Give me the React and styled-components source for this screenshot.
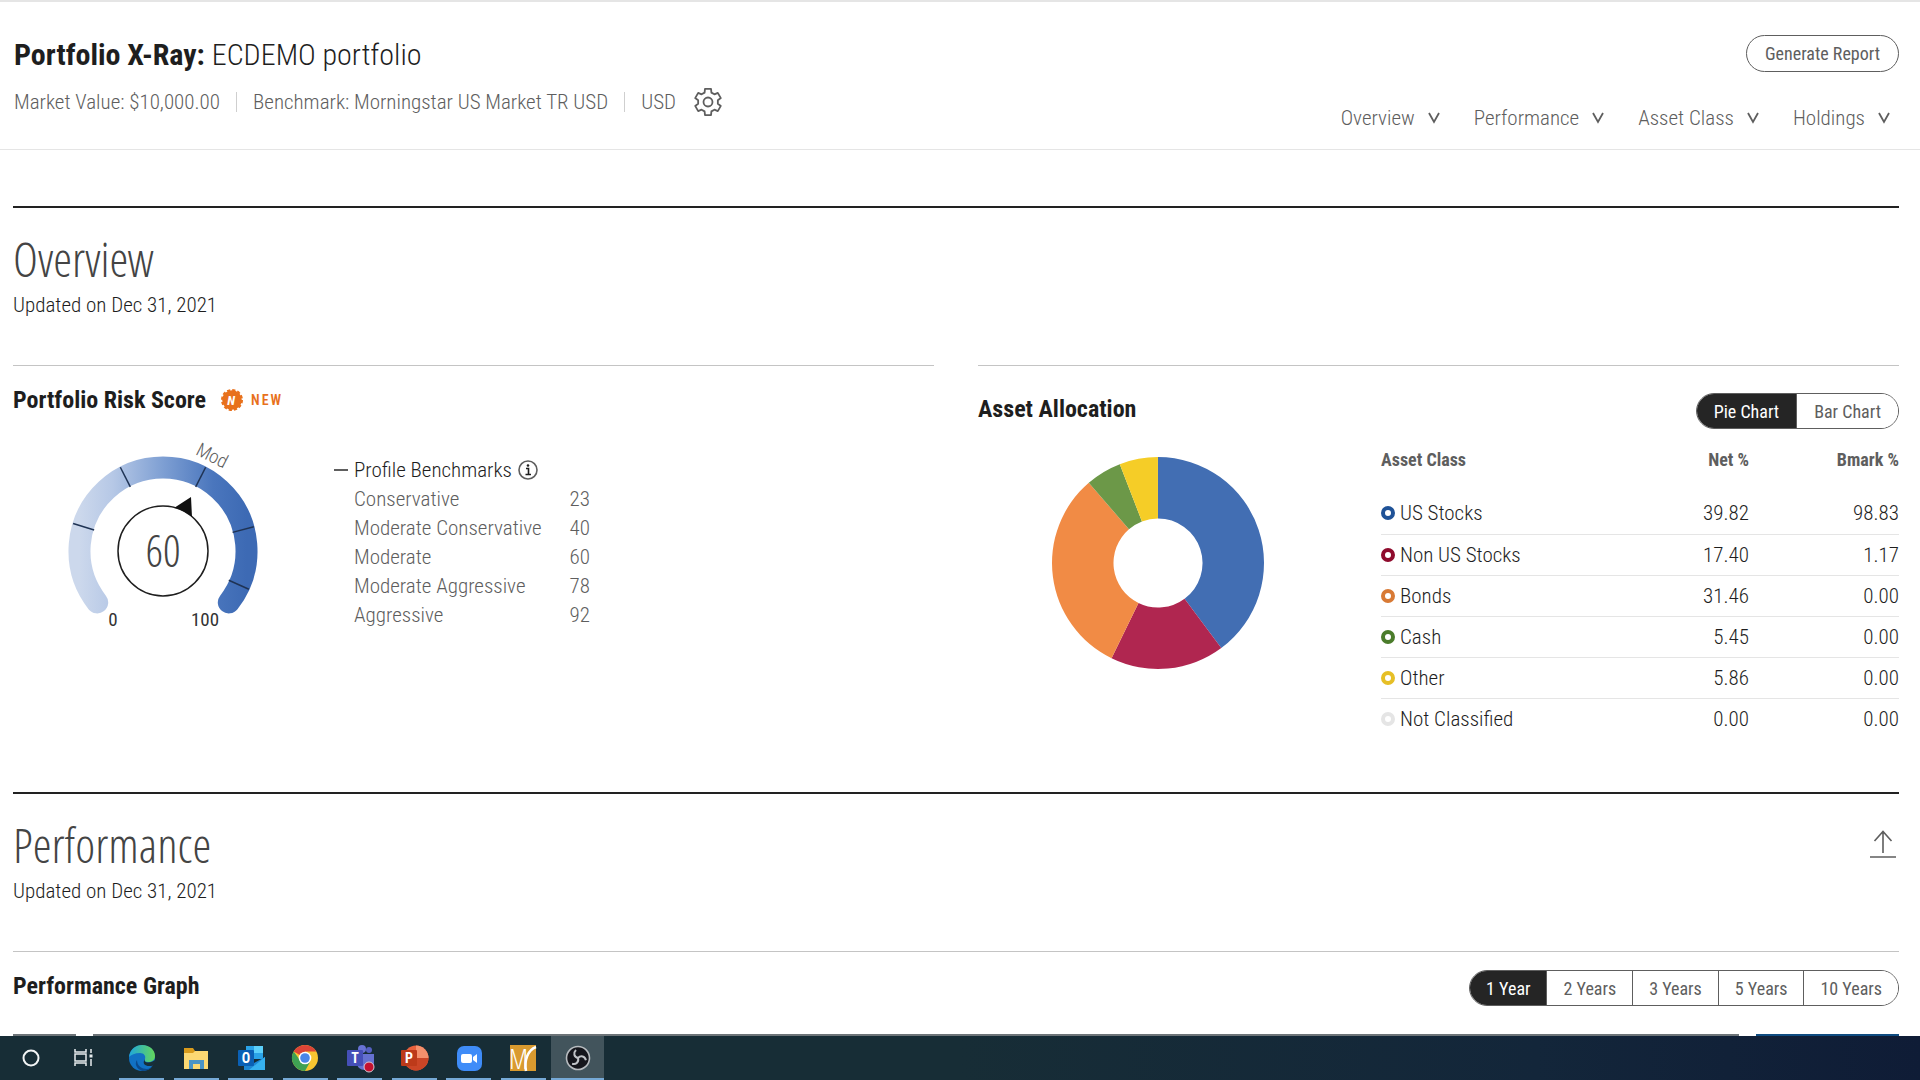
import styled, { createGlobalStyle } from "styled-components";

const ink = "#1e1e1e";
const grey = "#5e5e5e";
const rule = "#c4c4c4";
const paleRule = "#e5e5e5";

const textFont = `"Roboto Condensed", "Liberation Sans", sans-serif`;
const displayFont = `"Open Sans Condensed Light", "Roboto Condensed", sans-serif`;

const benchmarks = [
  ["Conservative", 23],
  ["Moderate Conservative", 40],
  ["Moderate", 60],
  ["Moderate Aggressive", 78],
  ["Aggressive", 92],
];

const assets = [
  { name: "US Stocks", net: 39.82, bmark: 98.83, ring: "#1f5297", fill: "#426eb3" },
  { name: "Non US Stocks", net: 17.4, bmark: 1.17, ring: "#8f0b2d", fill: "#b02650" },
  { name: "Bonds", net: 31.46, bmark: 0, ring: "#d87a35", fill: "#f18b45" },
  { name: "Cash", net: 5.45, bmark: 0, ring: "#4b7c2b", fill: "#6c9848" },
  { name: "Other", net: 5.86, bmark: 0, ring: "#e6bf26", fill: "#f5cd27" },
  { name: "Not Classified", net: 0, bmark: 0, ring: "#e5e5e5", fill: "#e5e5e5" },
];

// angle in degrees, clockwise from twelve o'clock
const polar = (cx, cy, r, angle) => {
  const rad = (angle * Math.PI) / 180;
  return [cx + r * Math.sin(rad), cy - r * Math.cos(rad)];
};

const Chevron = () => (
  <svg width="12" height="12" viewBox="0 0 12 12" aria-hidden="true">
    <path d="M1 1 L6 10 L11 1" fill="none" stroke={grey} strokeWidth="1.8" />
  </svg>
);

const Gear = () => {
  const teeth = [0, 60, 120, 180, 240, 300].flatMap((a) => [
    polar(14, 15, 10, a - 20),
    polar(14, 15, 13.4, a - 13),
    polar(14, 15, 13.4, a + 13),
    polar(14, 15, 10, a + 20),
  ]);
  return (
    <svg width="28" height="30" viewBox="0 0 28 30" aria-hidden="true">
      <g fill="none" stroke={grey} strokeWidth="1.8" strokeLinejoin="round">
        <polygon points={teeth.join(" ")} />
        <circle cx="14" cy="15" r="4.5" />
      </g>
    </svg>
  );
};

const NewBadge = () => (
  <svg width="22" height="22" viewBox="0 0 22 22" aria-hidden="true">
    <circle cx="11" cy="11" r="9.8" fill="#e8711c" />
    <circle
      cx="11"
      cy="11"
      r="10"
      fill="none"
      stroke="#e8711c"
      strokeWidth="2"
      strokeDasharray="3.2 2.03"
    />
    <text
      x="11"
      y="15.5"
      textAnchor="middle"
      fill="#fff"
      fontSize="13"
      fontWeight="700"
      fontStyle="italic"
    >
      N
    </text>
  </svg>
);

const Info = () => (
  <svg width="20" height="20" viewBox="0 0 20 20" aria-hidden="true">
    <circle cx="10" cy="10" r="9" fill="none" stroke={grey} strokeWidth="1.6" />
    <path d="M8 8.5h2.5v6M7.5 14.5h5.5" fill="none" stroke={ink} strokeWidth="1.6" />
    <circle cx="10" cy="5.5" r="1.3" fill={ink} />
  </svg>
);

const Upload = () => (
  <svg width="28" height="30" viewBox="0 0 28 30" aria-hidden="true">
    <path
      d="M14 24V3M5.5 12 14 2.5 22.5 12M1 28h26"
      fill="none"
      stroke={grey}
      strokeWidth="1.6"
    />
  </svg>
);

const Gauge = ({ score }) => {
  const [sx, sy] = polar(105, 105, 83.5, -128);
  const [ex, ey] = polar(105, 105, 83.5, 128);
  return (
    <svg width="210" height="194" viewBox="0 0 210 194" role="img" aria-label="Risk score">
      <defs>
        <linearGradient id="risk" x1="0" x2="1" y1="0.5" y2="0.5">
          <stop offset="0" stopColor="#ccd8ec" />
          <stop offset="0.2" stopColor="#b6c8e6" />
          <stop offset="0.5" stopColor="#7e9fd3" />
          <stop offset="0.8" stopColor="#4a76bd" />
          <stop offset="1" stopColor="#3d6ab4" />
        </linearGradient>
      </defs>
      <path
        d={`M${sx} ${sy}A83.5 83.5 0 1 1 ${ex} ${ey}`}
        fill="none"
        stroke="url(#risk)"
        strokeWidth="22"
        strokeLinecap="round"
      />
      {[-73, -27, 27, 75, 114].map((a) => {
        const [x1, y1] = polar(105, 105, 72, a);
        const [x2, y2] = polar(105, 105, 94, a);
        return <path key={a} d={`M${x1} ${y1}L${x2} ${y2}`} stroke="#1f3354" strokeWidth="1.5" />;
      })}
      <circle cx="105" cy="105" r="45" fill="none" stroke={ink} strokeWidth="1.5" />
      <path d="M116 62 L133 51 L134 71 Q126 64 116 62z" fill="#111" />
      <ScoreText x="105" y="121">
        {score}
      </ScoreText>
      <GaugeText x="154" y="16" $light transform="rotate(27 154 10)">
        Mod
      </GaugeText>
      <GaugeText x="55" y="180">
        0
      </GaugeText>
      <GaugeText x="147" y="180">
        100
      </GaugeText>
    </svg>
  );
};

const Pie = () => {
  let turned = 0;
  const slices = assets
    .filter((a) => a.net > 0)
    .map((a) => {
      const from = turned * 3.6;
      turned += a.net;
      const to = turned * 3.6;
      const big = to - from > 180 ? 1 : 0;
      const d = [
        `M${polar(106, 106, 44.5, from)}`,
        `L${polar(106, 106, 106, from)}`,
        `A106 106 0 ${big} 1 ${polar(106, 106, 106, to)}`,
        `L${polar(106, 106, 44.5, to)}`,
        `A44.5 44.5 0 ${big} 0 ${polar(106, 106, 44.5, from)}z`,
      ];
      return <path key={a.name} d={d.join("")} fill={a.fill} />;
    });
  return (
    <svg width="212" height="212" viewBox="0 0 212 212" role="img" aria-label="Asset allocation">
      {slices}
    </svg>
  );
};

const LogoText = styled.text`
  fill: #fff;
  font-family: ${displayFont};
  font-size: 28px;
  font-weight: 400;
`;

const Tile = ({ color, children }) => (
  <>
    <rect x="1" y="6" width="16" height="16" rx="1" fill={color} />
    <text x="9" y="19" textAnchor="middle" fill="#fff" fontSize="14" fontWeight="700">
      {children}
    </text>
  </>
);

const icons = {
  Edge: (
    <>
      <defs>
        <linearGradient id="edgeTop" x1="0" x2="1">
          <stop offset="0" stopColor="#1fa6dc" />
          <stop offset="1" stopColor="#63d65b" />
        </linearGradient>
      </defs>
      <circle cx="14" cy="14" r="13" fill="#1171c4" />
      <path
        d="M1 13C2 5 8 1 14 1c8 0 13 5 13 11 0 4-3 6-7 6-3 0-4-1-3-3 1-3-1-6-5-6-5 0-9 2-11 4z"
        fill="url(#edgeTop)"
      />
      <path d="M9 16c0 6 5 9 10 9 2 0 4-1 6-3-3 4-7 5-11 5-5-2-8-7-5-11z" fill="#0b4a8e" />
      <path d="M17 15c-1 2 0 3.5 3 3.5 3 0 5-1 7-2.5l2 1.5-4 4c-6 2-12-1-8-6.5z" fill="#182e38" />
    </>
  ),
  Explorer: (
    <>
      <path d="M2 4h9l2 3h13v18H2z" fill="#d99b1c" />
      <path d="M2 9h9l2-2h13v18H2z" fill="#fcd873" />
      <path d="M7 25v-9h15v9h-4v-5h-7v5z" fill="#4b94c6" />
    </>
  ),
  Outlook: (
    <>
      <path d="M9 2h17v13H9z" fill="#2aa3e8" />
      <path d="M17 2h9v7h-9z" fill="#5cd0fa" />
      <path d="M7 13l10 6 11-6v13H7z" fill="#1d86d2" />
      <path d="M28 13v13H12z" fill="#36b1ef" />
      <Tile color="#0a60b5">O</Tile>
    </>
  ),
  Chrome: (
    <>
      <circle cx="14" cy="14" r="13" fill="#f7c531" />
      <path d="M14 14 2.7 7.5A13 13 0 0 1 25.3 7.5H14z" fill="#dc4437" />
      <path d="M2.7 7.5A13 13 0 0 0 14 27l5-9-8 1z" fill="#3fa153" />
      <circle cx="14" cy="14" r="6.3" fill="#fff" />
      <circle cx="14" cy="14" r="4.8" fill="#4a86e8" />
    </>
  ),
  Teams: (
    <>
      <circle cx="16" cy="5" r="4" fill="#6872d4" />
      <circle cx="23" cy="6" r="3" fill="#5560c2" />
      <path d="M11 10h17v9c0 4-4 7-9 7s-8-3-8-7z" fill="#6571d0" />
      <Tile color="#454fb8">T</Tile>
      <circle cx="23" cy="23" r="5" fill="#c4122f" stroke="#d9c9d4" />
    </>
  ),
  PowerPoint: (
    <>
      <circle cx="16" cy="14" r="12.5" fill="#e8603c" />
      <path d="M16 1.5A12.5 12.5 0 0 1 28.5 14H16z" fill="#f4906c" />
      <path d="M3.5 14h25a12.5 12.5 0 0 1-25 0z" fill="#cb4526" />
      <Tile color="#bd3a1a">P</Tile>
    </>
  ),
  Zoom: (
    <>
      <rect x="2" y="2" width="25" height="25" rx="7" fill="#3f8cf8" />
      <rect x="6" y="10" width="11" height="9" rx="2" fill="#fff" />
      <path d="M18 13l4-3v9l-4-3z" fill="#fff" />
    </>
  ),
  "Morningstar Office": (
    <>
      <rect x="1" y="1" width="26" height="26" fill="#d99a2f" />
      <path d="M17 27C15 16 19 6 27 3" fill="none" stroke="#fff" strokeWidth="2.5" />
      <LogoText x="0" y="25">
        M
      </LogoText>
    </>
  ),
  "OBS Studio": (
    <>
      <circle cx="14" cy="14" r="11.5" fill="#15161c" stroke="#b8bcc0" strokeWidth="1.6" />
      {[0, 120, 240].map((a) => (
        <path
          key={a}
          d="M14 14c-4-1-5-5-2-8"
          transform={`rotate(${a} 14 14)`}
          fill="none"
          stroke="#c0c3c7"
          strokeWidth="2"
        />
      ))}
    </>
  ),
};

const Cortana = () => (
  <svg width="28" height="28" viewBox="0 0 28 28" aria-hidden="true">
    <circle cx="14" cy="14" r="7.5" fill="none" stroke="#f1f4f5" strokeWidth="2" />
  </svg>
);

const TaskView = () => (
  <svg width="28" height="28" viewBox="0 0 28 28" aria-hidden="true">
    <g fill="none" stroke="#e7ecee" strokeWidth="1.5">
      <path d="M5 5v3h11V5M5 22v-3h11v3M5 10h11v7H5zM21 5v4M21 15v7" />
      <path d="M19.5 12h3" strokeWidth="3" />
    </g>
  </svg>
);

const Segments = ({ label, options, tight }) => (
  <Segmented role="group" aria-label={label}>
    {options.map((option, i) => (
      <Segment
        key={option}
        type="button"
        $active={i === 0}
        $tight={tight}
        aria-pressed={i === 0}
      >
        {option}
      </Segment>
    ))}
  </Segmented>
);

const App = () => (
  <Screen>
    <GlobalStyle />
    <Page>
      <Header>
        <div>
          <Title>
            Portfolio X-Ray: <span>ECDEMO portfolio</span>
          </Title>
          <Meta>
            <MetaItem>Market Value: $10,000.00</MetaItem>
            <MetaItem>Benchmark: Morningstar US Market TR USD</MetaItem>
            <MetaItem>USD</MetaItem>
            <IconButton type="button" aria-label="Settings">
              <Gear />
            </IconButton>
          </Meta>
        </div>
        <HeaderSide>
          <Pill type="button">Generate Report</Pill>
          <Nav>
            {["Overview", "Performance", "Asset Class", "Holdings"].map((item) => (
              <NavButton key={item} type="button">
                {item}
                <Chevron />
              </NavButton>
            ))}
          </Nav>
        </HeaderSide>
      </Header>

      <Content>
        <Section>
          <SectionHead>
            <div>
              <SectionTitle>Overview</SectionTitle>
              <Updated>Updated on Dec 31, 2021</Updated>
            </div>
          </SectionHead>
          <Cards>
            <Card>
              <CardHead>
                <CardTitle>Portfolio Risk Score</CardTitle>
                <NewTag>
                  <NewBadge />
                  NEW
                </NewTag>
              </CardHead>
              <Risk>
                <Gauge score={60} />
                <Profile>
                  <ProfileHead>
                    <Dash />
                    Profile Benchmarks
                    <Info />
                  </ProfileHead>
                  <ProfileTable>
                    <tbody>
                      {benchmarks.map(([name, value]) => (
                        <tr key={name}>
                          <th scope="row">{name}</th>
                          <td>{value}</td>
                        </tr>
                      ))}
                    </tbody>
                  </ProfileTable>
                </Profile>
              </Risk>
            </Card>
            <Card>
              <CardHead $spread $roomy>
                <CardTitle>Asset Allocation</CardTitle>
                <Segments label="Chart type" options={["Pie Chart", "Bar Chart"]} />
              </CardHead>
              <Allocation>
                <PieBox>
                  <Pie />
                </PieBox>
                <AssetTable>
                  <thead>
                    <tr>
                      <th>Asset Class</th>
                      <th>Net %</th>
                      <th>Bmark %</th>
                    </tr>
                  </thead>
                  <tbody>
                    {assets.map((a) => (
                      <tr key={a.name}>
                        <td>
                          <AssetName>
                            <Ring $color={a.ring} />
                            {a.name}
                          </AssetName>
                        </td>
                        <td>{a.net.toFixed(2)}</td>
                        <td>{a.bmark.toFixed(2)}</td>
                      </tr>
                    ))}
                  </tbody>
                </AssetTable>
              </Allocation>
            </Card>
          </Cards>
        </Section>

        <Section>
          <SectionHead>
            <div>
              <SectionTitle>Performance</SectionTitle>
              <Updated>Updated on Dec 31, 2021</Updated>
            </div>
            <IconButton type="button" aria-label="Export">
              <Upload />
            </IconButton>
          </SectionHead>
          <Card>
            <CardHead $spread>
              <CardTitle>Performance Graph</CardTitle>
              <Segments
                label="Period"
                options={["1 Year", "2 Years", "3 Years", "5 Years", "10 Years"]}
                tight
              />
            </CardHead>
            <GraphEdge>
              <span />
              <span />
              <span />
            </GraphEdge>
          </Card>
        </Section>
      </Content>
    </Page>

    <Taskbar>
      <Task type="button" aria-label="Search">
        <Cortana />
      </Task>
      <Task type="button" aria-label="Task view">
        <TaskView />
      </Task>
      <Apps>
        {Object.entries(icons).map(([name, icon]) => (
          <AppButton key={name} type="button" aria-label={name} $active={name === "OBS Studio"}>
            <svg width="28" height="28" viewBox="0 0 28 28" aria-hidden="true">
              {icon}
            </svg>
          </AppButton>
        ))}
      </Apps>
    </Taskbar>
  </Screen>
);

const GlobalStyle = createGlobalStyle`
  * {
    box-sizing: border-box;
  }

  body {
    margin: 0;
    background: #fff;
    color: ${ink};
    font-family: ${textFont};
    font-size: 21px;
    font-weight: 300;
    line-height: 28px;
  }

  button {
    font-family: inherit;
    cursor: pointer;
  }

  h1, h2, h3, p {
    margin: 0;
  }

  svg {
    display: block;
    flex-shrink: 0;
    overflow: visible;
  }
`;

const Screen = styled.div`
  display: flex;
  flex-direction: column;
  height: 100vh;
`;

const Page = styled.div`
  flex: 1;
  min-height: 0;
  overflow: hidden;
  border-top: 2px solid ${paleRule};
`;

const Header = styled.header`
  display: flex;
  justify-content: space-between;
  height: 148px;
  padding: 33px 21px 0 14px;
  border-bottom: 1px solid ${paleRule};
`;

const Title = styled.h1`
  font-size: 30px;
  line-height: 40px;
  font-weight: 700;

  span {
    font-weight: 300;
  }
`;

const Meta = styled.div`
  display: flex;
  align-items: center;
  margin-top: 12px;
  color: ${grey};
`;

const MetaItem = styled.span`
  line-height: 20px;

  & + & {
    margin-left: 16px;
    padding-left: 16px;
    border-left: 1px solid #cfcfcf;
  }
`;

const IconButton = styled.button`
  height: 30px;
  margin-left: 18px;
  padding: 0;
  border: 0;
  background: none;
`;

const HeaderSide = styled.div`
  display: flex;
  flex-direction: column;
  align-items: flex-end;
  gap: 32px;
`;

const Pill = styled.button`
  height: 37px;
  padding: 0 18px;
  border: 1px solid ${grey};
  border-radius: 19px;
  background: #fff;
  color: ${grey};
  font-size: 18px;
`;

const Nav = styled.nav`
  display: flex;
  gap: 34px;
  margin-right: 9px;
`;

const NavButton = styled.button`
  display: flex;
  align-items: center;
  gap: 13px;
  padding: 0;
  border: 0;
  background: none;
  color: ${grey};
  font-size: 21px;
  font-weight: 300;
  line-height: 28px;
`;

const Content = styled.main`
  padding: 56px 21px 0 13px;
`;

const Section = styled.section`
  border-top: 2px solid #222;

  & + & {
    margin-top: 53px;
  }
`;

const SectionHead = styled.div`
  display: flex;
  justify-content: space-between;
  height: 157px;
  padding-top: 26px;

  ${IconButton} {
    margin: 9px 2px 0 0;
  }
`;

const SectionTitle = styled.h2`
  color: #444;
  font-family: ${displayFont};
  font-size: 48px;
  line-height: 50px;
  font-weight: 400;
`;

const Updated = styled.p`
  margin-top: 7px;
`;

const Cards = styled.div`
  display: grid;
  grid-template-columns: 1fr 1fr;
  gap: 44px;
`;

const Card = styled.div`
  border-top: 1px solid ${rule};
`;

const CardHead = styled.div`
  display: flex;
  align-items: flex-start;
  justify-content: ${({ $spread }) => ($spread ? "space-between" : "flex-start")};
  gap: 15px;
  padding-top: ${({ $roomy }) => ($roomy ? 27 : 18)}px;
`;

const CardTitle = styled.h3`
  font-size: 24px;
  line-height: 32px;
  font-weight: 700;
`;

const NewTag = styled.span`
  display: flex;
  align-items: center;
  gap: 8px;
  height: 32px;
  color: #e8711c;
  font-size: 14px;
  font-weight: 600;
  letter-spacing: 2px;
`;

const Risk = styled.div`
  display: flex;
  gap: 66px;
  padding: 30px 0 0 45px;
`;

const GaugeText = styled.text`
  fill: ${({ $light }) => ($light ? grey : "#333")};
  font-size: 19px;
  font-weight: ${({ $light }) => ($light ? 300 : 400)};
  text-anchor: middle;
`;

const ScoreText = styled.text`
  fill: #444;
  font-family: ${displayFont};
  font-size: 44px;
  font-weight: 400;
  text-anchor: middle;
`;

const Profile = styled.div`
  padding-top: 10px;
`;

const ProfileHead = styled.div`
  display: flex;
  align-items: center;
  gap: 6px;
`;

const Dash = styled.span`
  width: 14px;
  height: 2px;
  background: ${grey};
`;

const ProfileTable = styled.table`
  width: 236px;
  margin: 1px 0 0 20px;
  border-collapse: collapse;
  color: ${grey};
  line-height: 29px;

  th {
    padding: 0;
    text-align: left;
    font-weight: 300;
  }

  td {
    padding: 0;
    text-align: right;
  }
`;

const Allocation = styled.div`
  display: grid;
  grid-template-columns: 1fr 518px;
  gap: 44px;
`;

const PieBox = styled.div`
  display: flex;
  justify-content: center;
  padding-top: 28px;
`;

const AssetTable = styled.table`
  border-collapse: collapse;
  table-layout: fixed;

  th {
    height: 64px;
    padding: 17px 0 0;
    color: ${grey};
    font-size: 18px;
    text-align: right;
    vertical-align: top;
  }

  td {
    height: 41px;
    padding: 0;
    text-align: right;
  }

  th:first-child,
  td:first-child {
    text-align: left;
  }

  th:last-child {
    width: 150px;
  }

  tr + tr td {
    border-top: 1px solid ${paleRule};
  }
`;

const AssetName = styled.span`
  display: flex;
  align-items: center;
  gap: 5px;
`;

const Ring = styled.span`
  width: 14px;
  height: 14px;
  border: 4px solid ${({ $color }) => $color};
  border-radius: 50%;
`;

const Segmented = styled.div`
  display: flex;
  height: 36px;
  border: 1px solid ${grey};
  border-radius: 18px;
  overflow: hidden;
`;

const Segment = styled.button`
  padding: 0 ${({ $tight }) => ($tight ? 16 : 17)}px;
  border: 0;
  background: ${({ $active }) => ($active ? "#252525" : "#fff")};
  color: ${({ $active }) => ($active ? "#fff" : grey)};
  font-size: 18px;

  & + & {
    border-left: 1px solid ${grey};
  }
`;

const GraphEdge = styled.div`
  display: flex;
  gap: 17px;
  margin-top: 28px;

  span {
    height: 2px;
    background: #6d7478;
  }

  span:first-child {
    width: 63px;
  }

  span:nth-child(2) {
    flex: 1;
  }

  span:last-child {
    width: 143px;
    background: #0f4c81;
  }
`;

const Taskbar = styled.footer`
  display: flex;
  height: 44px;
  padding-left: 4px;
  background: linear-gradient(90deg, #172d36 0%, #172d36 50%, #13263a 80%, #0f1c36 100%);
`;

const Task = styled.button`
  display: flex;
  align-items: center;
  justify-content: center;
  width: 53px;
  padding: 0;
  border: 0;
  background: none;
`;

const Apps = styled.div`
  display: flex;
  justify-content: space-between;
  width: 489px;
  margin-left: 5px;
`;

const AppButton = styled(Task)`
  background: linear-gradient(#76a9d6, #76a9d6) center bottom no-repeat;
  background-size: ${({ $active }) => ($active ? "100%" : "45px")} 2px;
  background-color: ${({ $active }) => ($active ? "#42545c" : "transparent")};
`;

export default App;
